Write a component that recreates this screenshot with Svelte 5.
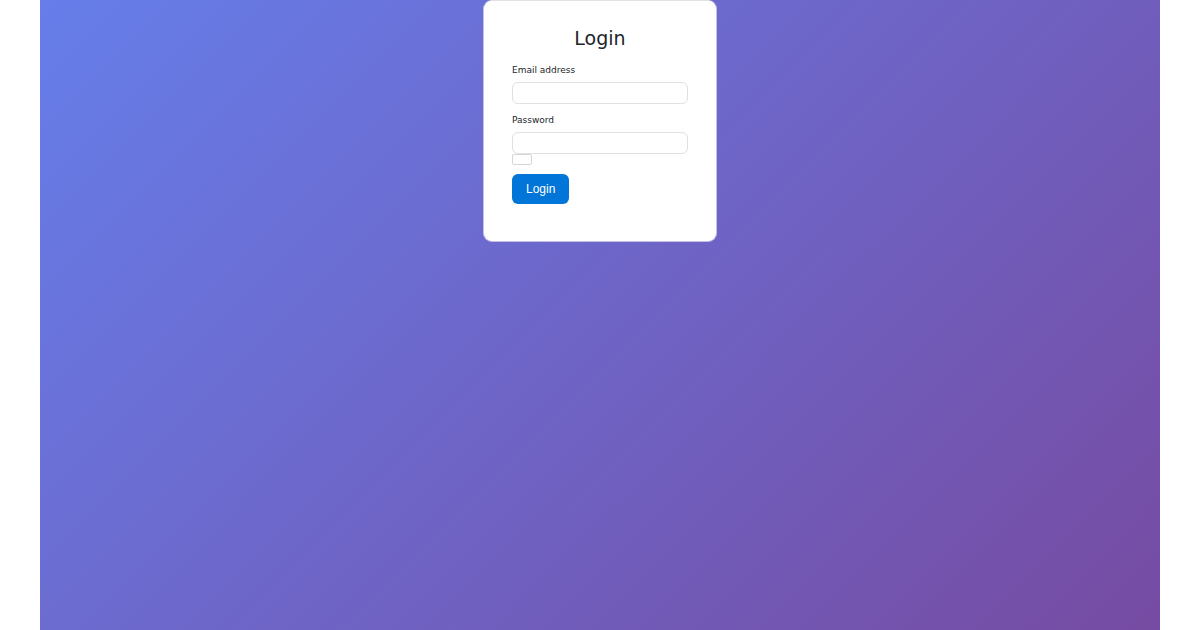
<script lang="ts">
	let email = $state("");
	let password = $state("");
	let showPassword = $state(false);

	function handleSubmit(event: SubmitEvent) {
		event.preventDefault();
	}
</script>

<main class="page">
	<div class="login-card">
		<h1 class="login-title">Login</h1>
		<form onsubmit={handleSubmit}>
			<div class="field">
				<label for="email">Email address</label>
				<input id="email" class="form-control" type="email" bind:value={email} />
			</div>
			<div class="field">
				<label for="password">Password</label>
				<input id="password" class="form-control" type={showPassword ? "text" : "password"} bind:value={password} />
				<button type="button" class="toggle" aria-label="Show password" onclick={() => (showPassword = !showPassword)}></button>
			</div>
			<button type="submit" class="login-btn">Login</button>
		</form>
	</div>
</main>

<style>
	.page {
		box-sizing: border-box;
		min-height: 100vh;
		margin: 0 40px;
		background: linear-gradient(135deg, #667eea 0%, #764ba2 100%);
		font-family: "DejaVu Sans", sans-serif;
		color: #212529;
		display: flex;
		justify-content: center;
		align-items: flex-start;
	}

	.login-card {
		box-sizing: border-box;
		width: 100%;
		max-width: 234px;
		padding: 24px 28px 37px;
		background-color: #fff;
		border: 1px solid #c3c0e2;
		border-top-color: #e2e2e6;
		border-radius: 9px;
	}

	.login-title {
		margin: 0 0 12px;
		font-size: 19px;
		font-weight: 400;
		line-height: 26px;
		text-align: center;
	}

	.field {
		margin-bottom: 9px;
	}

	label {
		display: block;
		margin-bottom: 5px;
		font-size: 9px;
		line-height: 14px;
	}

	.form-control {
		display: block;
		box-sizing: border-box;
		width: 100%;
		height: 22px;
		padding: 4px 8px;
		border: 1px solid #dee0e2;
		border-radius: 6px;
		font-size: 9px;
	}

	.toggle {
		display: block;
		box-sizing: border-box;
		width: 20px;
		height: 11px;
		padding: 0;
		background-color: #fff;
		border: 1px solid #d6d6d6;
		border-radius: 2px;
	}

	.login-btn {
		display: block;
		padding: 0 14px;
		background-color: #0275d8;
		border: 0;
		border-radius: 6px;
		color: #fff;
		font-family: "Liberation Sans", Arial, sans-serif;
		font-size: 12px;
		line-height: 30px;
	}
</style>
